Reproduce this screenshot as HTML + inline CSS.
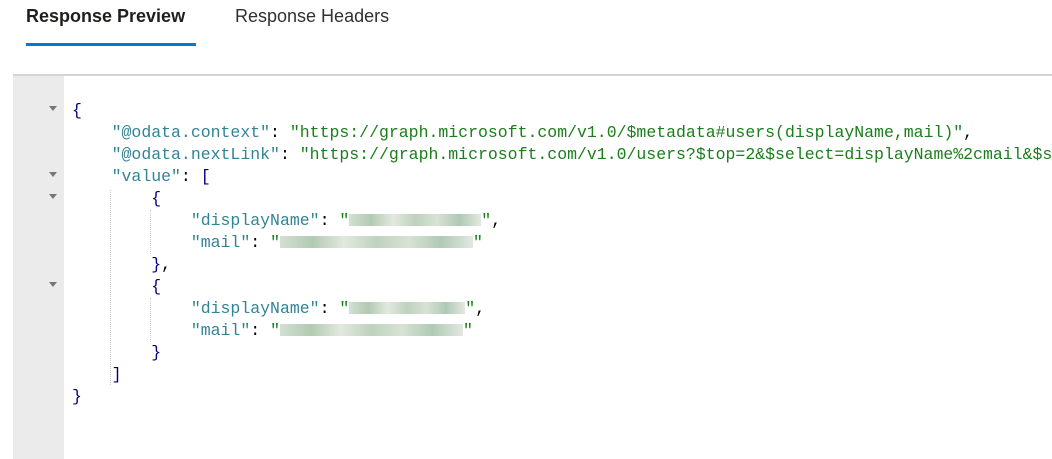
<!DOCTYPE html>
<html><head><style>
body{margin:0;width:1052px;height:459px;background:#fff;overflow:hidden;position:relative;font-family:"Liberation Sans",sans-serif}
.tab{position:absolute;top:6px;font-size:18px;color:#323130}
.ul{position:absolute;left:26px;top:43px;width:170px;height:3px;background:#0078d4}
.ed{position:absolute;left:13px;top:74px;width:1039px;bottom:0;border-top:2px solid #d4d4d4}
.gut{position:absolute;left:13px;top:76px;width:51px;bottom:0;background:#ebebeb}
.code{position:absolute;left:72px;top:100px;width:980px;overflow:hidden;font-family:"Liberation Mono",monospace;font-size:16.5px;line-height:22px;white-space:pre;color:#000}
.k{color:#318495}.s{color:#1a7f1a}.p{color:#000080}
.ar{position:absolute;left:49px;width:0;height:0;border-left:4px solid transparent;border-right:4px solid transparent;border-top:5px solid #777}
.g{position:absolute;border-left:1px dotted #ccc}
.b{display:inline-block;height:12px;vertical-align:-1px;background:linear-gradient(90deg,#cfdccf,#a9c4a9,#dfe6dc,#b7cdb6,#d4dfd0,#a7c3ad,#e0e6de);opacity:.9}
</style></head><body>
<div class="tab" style="left:26px;font-weight:bold;color:#201f1e">Response Preview</div>
<div class="tab" style="left:235px">Response Headers</div>
<div class="ul"></div>
<div class="ed"></div><div class="gut"></div>
<div class="ar" style="top:106px"></div>
<div class="ar" style="top:172px"></div>
<div class="ar" style="top:194px"></div>
<div class="ar" style="top:282px"></div>
<div class="g" style="left:110px;top:190px;height:195px"></div>
<div class="g" style="left:150px;top:210px;height:44px"></div>
<div class="g" style="left:150px;top:298px;height:44px"></div>
<div class="code"><span class="p">{</span>
    <span class="k">"@odata.context"</span>: <span class="s">"https://graph.microsoft.com/v1.0/$metadata#users(displayName,mail)"</span>,
    <span class="k">"@odata.nextLink"</span>: <span class="s">"https://graph.microsoft.com/v1.0/users?$top=2&amp;$select=displayName%2cmail&amp;$sk</span>
    <span class="k">"value"</span>: <span class="p">[</span>
        <span class="p">{</span>
            <span class="k">"displayName"</span>: <span class="s">"<span class="b" style="width:132px"></span>"</span>,
            <span class="k">"mail"</span>: <span class="s">"<span class="b" style="width:193px"></span>"</span>
        <span class="p">}</span>,
        <span class="p">{</span>
            <span class="k">"displayName"</span>: <span class="s">"<span class="b" style="width:116px"></span>"</span>,
            <span class="k">"mail"</span>: <span class="s">"<span class="b" style="width:183px"></span>"</span>
        <span class="p">}</span>
    <span class="p">]</span>
<span class="p">}</span></div>
</body></html>
